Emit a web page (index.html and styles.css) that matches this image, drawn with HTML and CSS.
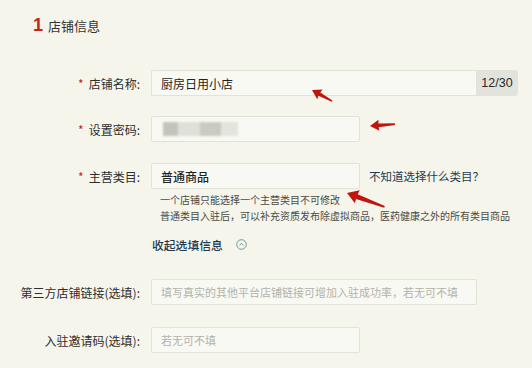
FILE: index.html
```html
<!DOCTYPE html>
<html lang="zh-CN">
<head>
<meta charset="utf-8">
<title>店铺信息</title>
<link rel="stylesheet" href="styles.css">
</head>
<body>
<div class="page">
  <div class="header">
    <span class="step">1</span>
    <span class="header-title">店铺信息</span>
  </div>
  <div class="form">
    <div class="row">
      <div class="label"><span class="req">*</span>店铺名称:</div>
      <div class="field w-name">厨房日用小店</div>
      <div class="counter">12/30</div>
    </div>
    <div class="row r2">
      <div class="label"><span class="req">*</span>设置密码:</div>
      <div class="field w-short"><span class="secret"></span></div>
    </div>
    <div class="row r3">
      <div class="label"><span class="req">*</span>主营类目:</div>
      <div class="field w-short bold">普通商品</div>
      <a class="hint">不知道选择什么类目？</a>
    </div>
    <div class="help">
      <div>一个店铺只能选择一个主营类目不可修改</div>
      <div>普通类目入驻后，可以补充资质发布除虚拟商品，医药健康之外的所有类目商品</div>
    </div>
    <div class="toggle">
      <span>收起选填信息</span>
      <svg class="toggle-icon" width="11" height="11" viewBox="0 0 11 11">
        <circle cx="5.5" cy="5.5" r="4.8" fill="none" stroke="#5f8f8c" stroke-width="0.9"/>
        <path d="M3.4 6.4 L5.5 4.3 L7.6 6.4" fill="none" stroke="#5f8f8c" stroke-width="0.9"/>
      </svg>
    </div>
    <div class="row r4">
      <div class="label">第三方店铺链接(选填):</div>
      <div class="field w-long placeholder">填写真实的其他平台店铺链接可增加入驻成功率，若无可不填</div>
    </div>
    <div class="row r5">
      <div class="label">入驻邀请码(选填):</div>
      <div class="field w-short placeholder">若无可不填</div>
    </div>
  </div>
  <svg class="annotations" width="532" height="368" viewBox="0 0 532 368">
    <g fill="#c0140e">
      <path transform="translate(312 90) rotate(28.8)" d="M0 0 L9 -5.5 L8.5 -1.8 L23 -0.6 L23 0.9 L8.5 2 L9 5.5 Z"/>
      <path transform="translate(370 126) rotate(-4.6)" d="M0 0 L9 -5.5 L8.5 -1.8 L25 -0.8 L25 0.9 L8.5 2 L9 5.5 Z"/>
      <path transform="translate(347 193) rotate(20.2)" d="M0 0 L11 -7 L10.5 -2.4 L40 -0.8 L40 1 L10.5 2.6 L11 7 Z"/>
    </g>
  </svg>
</div>
</body>
</html>
```
FILE: styles.css
```css
html, body {
  margin: 0;
  padding: 0;
}
body {
  background: #f6f5ec;
  font-family: "Noto Sans CJK SC", "Noto Sans", sans-serif;
  color: #333;
  font-size: 12px;
}
.page {
  position: relative;
  width: 532px;
  height: 368px;
  overflow: hidden;
}
.header {
  height: 50px;
  display: flex;
  align-items: center;
  padding-left: 33px;
  gap: 5px;
}
.step {
  color: #c4261d;
  font-family: "Liberation Sans", sans-serif;
  font-size: 18px;
  font-weight: 700;
  line-height: 1;
}
.header-title {
  font-size: 13px;
  color: #333;
}
.form {
  padding-top: 20px;
}
.row {
  display: flex;
  align-items: center;
  height: 26px;
}
.r2 { margin-top: 20px; }
.r3 { margin-top: 21px; }
.r4 { margin-top: 26px; }
.r5 { margin-top: 22px; }
.label {
  width: 140px;
  padding-right: 11px;
  text-align: right;
  font-size: 12px;
  color: #2e2e2e;
  white-space: nowrap;
}
.req {
  color: #c4261d;
  margin-right: 5px;
}
.field {
  box-sizing: border-box;
  height: 26px;
  border: 1px solid #e3e2d8;
  background: #f9f9f4;
  border-radius: 2px;
  padding: 0 9px;
  display: flex;
  align-items: center;
  font-size: 12px;
  color: #222;
  white-space: nowrap;
}
.w-name {
  width: 325px;
  border-right: none;
  border-radius: 2px 0 0 2px;
}
.w-short { width: 209px; }
.w-long { width: 326px; }
.bold { font-weight: 500; }
.placeholder {
  color: #b3b3aa;
  font-size: 11px;
}
.counter {
  box-sizing: border-box;
  width: 42px;
  height: 26px;
  background: #e2e3da;
  border-radius: 0 3px 3px 0;
  display: flex;
  align-items: center;
  justify-content: center;
  font-family: "Liberation Sans", sans-serif;
  font-size: 12.5px;
  color: #2a2a2a;
}
.secret {
  display: block;
  width: 75px;
  height: 14px;
  margin-left: 2px;
  background: linear-gradient(90deg, #c3c5bb 0 20%, #dfe0d8 20% 50%, #c9cbc1 50% 78%, #e3e4dc 78% 100%);
  filter: blur(0.8px);
}
.hint {
  margin-left: 9px;
  font-size: 11.5px;
  color: #1d3a4f;
}
.help {
  margin-top: 3px;
  padding-left: 160px;
  font-size: 10px;
  line-height: 16px;
  color: #4a4a44;
  white-space: nowrap;
}
.toggle {
  margin-top: 11px;
  padding-left: 152px;
  height: 18px;
  display: flex;
  align-items: center;
  font-size: 11.8px;
  font-weight: 500;
  color: #1d3c52;
}
.toggle-icon {
  margin-left: 13px;
}
.annotations {
  position: absolute;
  left: 0;
  top: 0;
  pointer-events: none;
}
```
